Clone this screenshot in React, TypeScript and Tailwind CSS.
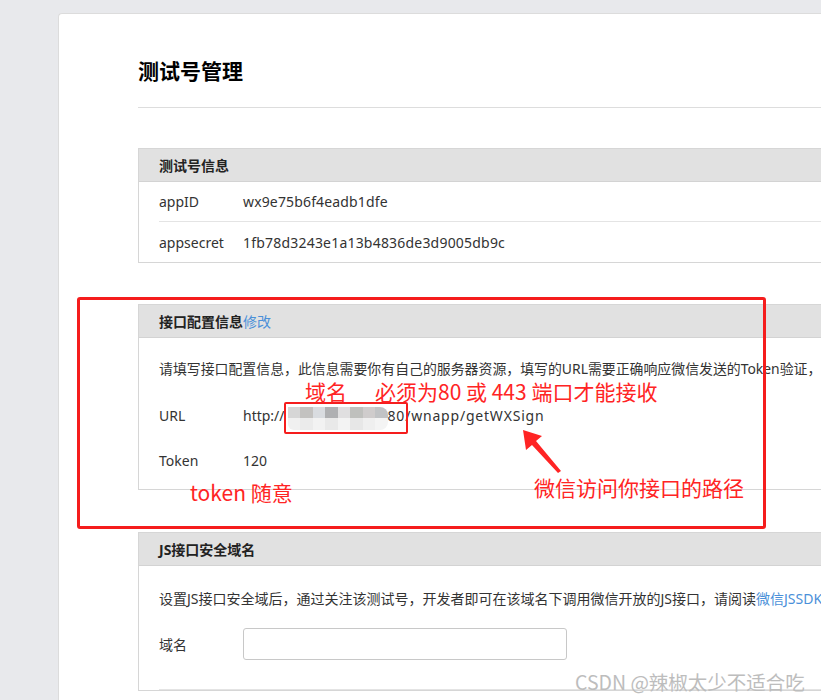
import React from 'react';

const topTiles = [
  'bg-[#d6d6d6]',
  'bg-[#c3c2c0]',
  'bg-[#d9dce0]',
  'bg-[#afb0b2]',
  'bg-[#e0dfe0]',
  'bg-[#bfc0bd]',
  'bg-[#cfcccc]',
  'bg-[#c1c3c5]',
];

const bottomTiles = [
  'bg-[#f0f0f0]',
  'bg-[#ebebeb]',
  'bg-[#f2f2f2]',
  'bg-[#e9e9e9]',
  'bg-[#f3f3f3]',
  'bg-[#e7e7e7]',
  'bg-[#efefef]',
  'bg-[#f4f4f4]',
];

const Mosaic: React.FC = () => (
  <div className="ml-[3px] mt-[7px] flex h-[23px] w-[100px] flex-col overflow-hidden rounded-r-[8px] rounded-bl-[6px]">
    <div className="flex h-[11px]">
      {topTiles.map((c, i) => (
        <div key={i} className={`h-full flex-1 ${c}`} />
      ))}
    </div>
    <div className="flex h-[12px]">
      {bottomTiles.map((c, i) => (
        <div key={i} className={`h-full flex-1 ${c}`} />
      ))}
    </div>
  </div>
);

const PanelHeader: React.FC<{ children: React.ReactNode }> = ({ children }) => (
  <div className="flex h-[33px] items-center border-b border-[#d3d3d3] bg-[#e1e1e1] px-5 text-[14px] font-bold text-[#222]">
    {children}
  </div>
);

const annotationFont = { fontFamily: '"Noto Sans CJK SC", sans-serif' };

const App: React.FC = () => {
  return (
    <div
      className="relative h-[700px] w-[821px] overflow-hidden bg-[#e8e9ec] pl-[58px] pt-[13px] text-[14px] text-[#333]"
      style={{ fontFamily: '"Noto Sans", "Noto Sans CJK SC", sans-serif' }}
    >
      <div className="h-[800px] w-[900px] rounded-tl-[4px] border-l border-t border-[#dcdcdc] bg-white pl-[79px] pt-[42px]">
        {/* title */}
        <div className="w-[800px] border-b border-[#dddddd] pb-[21px]">
          <h1 className="h-[30px] text-[21px] font-bold leading-[30px] text-black">测试号管理</h1>
        </div>

        {/* 测试号信息 */}
        <div className="mt-[40px] w-[800px] border border-[#d6d6d6]">
          <PanelHeader>测试号信息</PanelHeader>
          <div className="px-5">
            <div className="flex h-[40px] items-center border-b border-[#e4e4e4]">
              <span className="w-[84px]">appID</span>
              <span className="tracking-[0.15px]">wx9e75b6f4eadb1dfe</span>
            </div>
            <div className="flex h-[40px] items-center">
              <span className="w-[84px]">appsecret</span>
              <span className="tracking-[0.2px]">1fb78d3243e1a13b4836de3d9005db9c</span>
            </div>
          </div>
        </div>

        {/* 接口配置信息 */}
        <div className="mt-[41px] w-[800px] border border-[#d6d6d6]">
          <PanelHeader>
            接口配置信息<span className="font-normal text-[#4a90d9]">修改</span>
          </PanelHeader>
          <div className="px-5 pb-[7px] pt-[19px]">
            <p className="h-[24px] whitespace-nowrap text-[13.9px] leading-[24px]">
              请填写接口配置信息，此信息需要你有自己的服务器资源，填写的URL需要正确响应微信发送的Token验证，
            </p>
            <div className="mt-[11px] flex h-[46px] items-center">
              <span className="w-[84px]">URL</span>
              <span>http://</span>
              <Mosaic />
              <span className="tracking-[0.8px]">80/wnapp/getWXSign</span>
            </div>
            <div className="flex h-[44px] items-center">
              <span className="w-[84px]">Token</span>
              <span>120</span>
            </div>
          </div>
        </div>

        {/* JS接口安全域名 */}
        <div className="mt-[42px] w-[800px] border border-[#d6d6d6]">
          <PanelHeader>JS接口安全域名</PanelHeader>
          <div className="px-5 pt-[21px]">
            <p className="h-[24px] whitespace-nowrap text-[14px] leading-[24px]">
              设置JS接口安全域后，通过关注该测试号，开发者即可在该域名下调用微信开放的JS接口，请阅读
              <span className="text-[#4a90d9]">微信JSSDK</span>
            </p>
            <div className="mt-[17px] flex items-center border-b border-[#e4e4e4] pb-[29px]">
              <span className="w-[84px]">域名</span>
              <input
                type="text"
                className="h-[32px] w-[324px] rounded-[3px] border border-[#c8c8c8] bg-white px-2 outline-none"
              />
            </div>
          </div>
        </div>
      </div>

      {/* annotations drawn over the page */}
      <div className="absolute left-[77px] top-[297px] h-[232px] w-[689px] rounded-[3px] border-[3px] border-[#f51d1d]" />
      <div className="absolute left-[284px] top-[402px] h-[32px] w-[124px] rounded-[2px] border-2 border-[#f51d1d]" />

      <div
        className="pointer-events-none absolute left-[305px] top-[377px] whitespace-nowrap text-[21px] leading-[28px] text-[#ff2424]"
        style={annotationFont}
      >
        域名
      </div>
      <div
        className="pointer-events-none absolute left-[375px] top-[377px] whitespace-nowrap text-[21px] leading-[28px] text-[#ff2424]"
        style={annotationFont}
      >
        必须为80 或 443 端口才能接收
      </div>
      <div
        className="pointer-events-none absolute left-[190px] top-[478px] whitespace-nowrap text-[21px] leading-[28px] text-[#ff2424]"
        style={annotationFont}
      >
        token 随意
      </div>
      <div
        className="pointer-events-none absolute left-[534px] top-[472px] whitespace-nowrap text-[21px] leading-[30px] text-[#ff2424]"
        style={annotationFont}
      >
        微信访问你接口的路径
      </div>

      <svg className="pointer-events-none absolute left-0 top-0" width="821" height="700" viewBox="0 0 821 700">
        <polygon points="523,430 526,450 532,445 558,473 561,471 536,441 542,436" fill="#ff2424" />
      </svg>

      <div
        className="pointer-events-none absolute left-[575px] top-[668px] whitespace-nowrap text-[19.5px] leading-[28px] text-[#bdbdbd]"
        style={annotationFont}
      >
        CSDN @辣椒太少不适合吃
      </div>
    </div>
  );
};

export default App;
